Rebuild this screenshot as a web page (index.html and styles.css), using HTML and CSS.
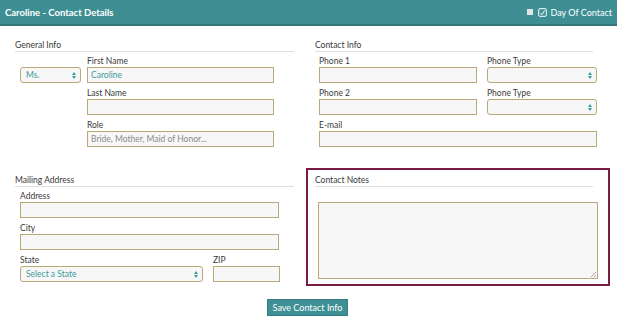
FILE: index.html
```html
<!DOCTYPE html>
<html lang="en">
<head>
  <meta charset="UTF-8" />
  <title>Caroline - Contact Details</title>
  <link rel="stylesheet" href="styles.css">
</head>
<body>
  <header class="topbar">
    <h1>Caroline - Contact Details</h1>
    <label class="day-toggle">
      <span class="mini-box"></span>
      <svg class="check-icon" viewBox="0 0 10 10" aria-hidden="true">
        <rect x="0.75" y="0.75" width="8.5" height="8.5" rx="1.2" />
        <path d="M2.6 5.6 L4.6 7.2 L7.4 2.6" />
      </svg>
      Day Of Contact
    </label>
  </header>

  <main class="details">
    <!-- General info -->
    <section class="panel">
      <h2>General Info</h2>
      <div class="fields general">
        <div class="title-col">
          <div class="select sel-title"><span class="val teal">Ms.</span><span class="arrows"></span></div>
        </div>
        <div class="name-col">
          <div class="field">
            <label>First Name</label>
            <div class="input w-name teal">Caroline</div>
          </div>
          <div class="field">
            <label>Last Name</label>
            <div class="input w-name"></div>
          </div>
          <div class="field">
            <label>Role</label>
            <div class="input w-name placeholder">Bride, Mother, Maid of Honor...</div>
          </div>
        </div>
      </div>
    </section>

    <!-- Contact info -->
    <section class="panel">
      <h2 class="short">Contact Info</h2>
      <div class="fields right">
        <div class="row">
          <div class="field">
            <label>Phone 1</label>
            <div class="input w-phone"></div>
          </div>
          <div class="field">
            <label>Phone Type</label>
            <div class="select w-type"><span class="val"></span><span class="arrows"></span></div>
          </div>
        </div>
        <div class="row">
          <div class="field">
            <label>Phone 2</label>
            <div class="input w-phone"></div>
          </div>
          <div class="field">
            <label>Phone Type</label>
            <div class="select w-type"><span class="val"></span><span class="arrows"></span></div>
          </div>
        </div>
        <div class="field">
          <label>E-mail</label>
          <div class="input w-email"></div>
        </div>
      </div>
    </section>

    <!-- Mailing address -->
    <section class="panel address">
      <h2>Mailing Address</h2>
      <div class="fields">
        <div class="field">
          <label>Address</label>
          <div class="input w-addr"></div>
        </div>
        <div class="field">
          <label>City</label>
          <div class="input w-addr"></div>
        </div>
        <div class="row last">
          <div class="field">
            <label>State</label>
            <div class="select w-state"><span class="val teal">Select a State</span><span class="arrows"></span></div>
          </div>
          <div class="field">
            <label>ZIP</label>
            <div class="input w-zip"></div>
          </div>
        </div>
      </div>
    </section>

    <!-- Notes -->
    <section class="panel notes">
      <h2 class="short">Contact Notes</h2>
      <div class="textarea"></div>
    </section>
  </main>

  <div class="actions">
    <button class="save-btn">Save Contact Info</button>
  </div>
</body>
</html>
```

FILE: styles.css
```css
* {
  margin: 0;
  padding: 0;
  box-sizing: border-box;
}
body {
  font-family: Lato, "Open Sans", sans-serif;
  background: #fff;
  color: #3a3a3a;
  font-size: 8.5px;
}

/* Header bar */
.topbar {
  height: 26px;
  background: #3d8f94;
  border-bottom: 2px solid #2f777b;
  color: #fff;
  display: flex;
  align-items: center;
  justify-content: space-between;
  padding: 0 5px 0 5px;
}
.topbar h1 {
  font-size: 9.5px;
  font-weight: 700;
}
.day-toggle {
  display: flex;
  align-items: center;
  font-size: 9px;
}
.mini-box {
  width: 6px;
  height: 6px;
  background: #e4e4e4;
  margin-right: 5px;
}
.check-icon {
  width: 9px;
  height: 9px;
  margin-right: 4px;
  fill: none;
  stroke: #fff;
  stroke-width: 1.1;
}

/* Grid of panels */
.details {
  display: grid;
  grid-template-columns: 300px 304px;
  column-gap: 1px;
  row-gap: 9px;
  padding: 7px 0 0 5px;
}
.panel {
  border: 2px solid transparent;
  padding: 5px 9px 5px 8px;
}
.panel:nth-child(even) {
  padding: 5px 8px 5px 7px;
}
.panel.address {
  padding-bottom: 0;
}
.panel.notes {
  border-color: #7a1c44;
}
.panel h2 {
  font-size: 8.5px;
  font-weight: 400;
  color: #3a3a3a;
  line-height: 11px;
  border-bottom: 1px solid #dedede;
}
.panel h2.short {
  margin-right: 7px;
}

.fields {
  margin-left: 5px;
  padding-top: 4px;
}
.fields.right {
  margin-left: 4px;
}
.general {
  display: flex;
  gap: 6px;
}
.title-col {
  padding-top: 11px;
}
.row {
  display: flex;
  gap: 10px;
}
.field {
  margin-bottom: 5px;
}
.row.last .field {
  margin-bottom: 0;
}
.field label {
  display: block;
  line-height: 11px;
  font-size: 8.5px;
  color: #3a3a3a;
}

/* Inputs */
.input,
.select,
.textarea {
  height: 16px;
  background: #f7f7f7;
  border: 1px solid #b9a878;
  font-size: 8.5px;
  line-height: 14px;
  padding: 0 3px;
  color: #3a3a3a;
}
.select {
  border-radius: 3px;
  display: flex;
  justify-content: space-between;
  align-items: center;
  padding: 0 4px 0 5px;
}
.teal {
  color: #3b9a9c;
}
.placeholder {
  color: #8a8a8a;
}
.arrows {
  width: 4px;
  height: 7px;
  position: relative;
}
.arrows::before,
.arrows::after {
  content: "";
  position: absolute;
  left: 0;
  border-left: 2px solid transparent;
  border-right: 2px solid transparent;
}
.arrows::before {
  top: 0;
  border-bottom: 3px solid #3b9a9c;
}
.arrows::after {
  bottom: 0;
  border-top: 3px solid #3b9a9c;
}

.sel-title { width: 61px; }
.w-name { width: 187px; }
.w-phone { width: 158px; }
.w-type { width: 110px; }
.w-email { width: 278px; }
.w-addr { width: 259px; }
.w-state { width: 183px; }
.w-zip { width: 67px; }

.textarea {
  height: 77px;
  width: 280px;
  margin: 15px 0 0 3px;
  position: relative;
}
.textarea::after {
  content: "";
  position: absolute;
  right: 1px;
  bottom: 1px;
  width: 5px;
  height: 5px;
  background: linear-gradient(135deg, transparent 45%, #aaa 45%, #aaa 55%, transparent 55%, transparent 70%, #aaa 70%, #aaa 80%, transparent 80%);
}

/* Save button */
.actions {
  display: flex;
  justify-content: center;
  padding-top: 13px;
  padding-right: 2px;
}
.save-btn {
  font-family: Lato, sans-serif;
  font-size: 9px;
  background: #3f9094;
  color: #fff;
  border: 1px solid #337f83;
  height: 17px;
  width: 81px;
}
```
